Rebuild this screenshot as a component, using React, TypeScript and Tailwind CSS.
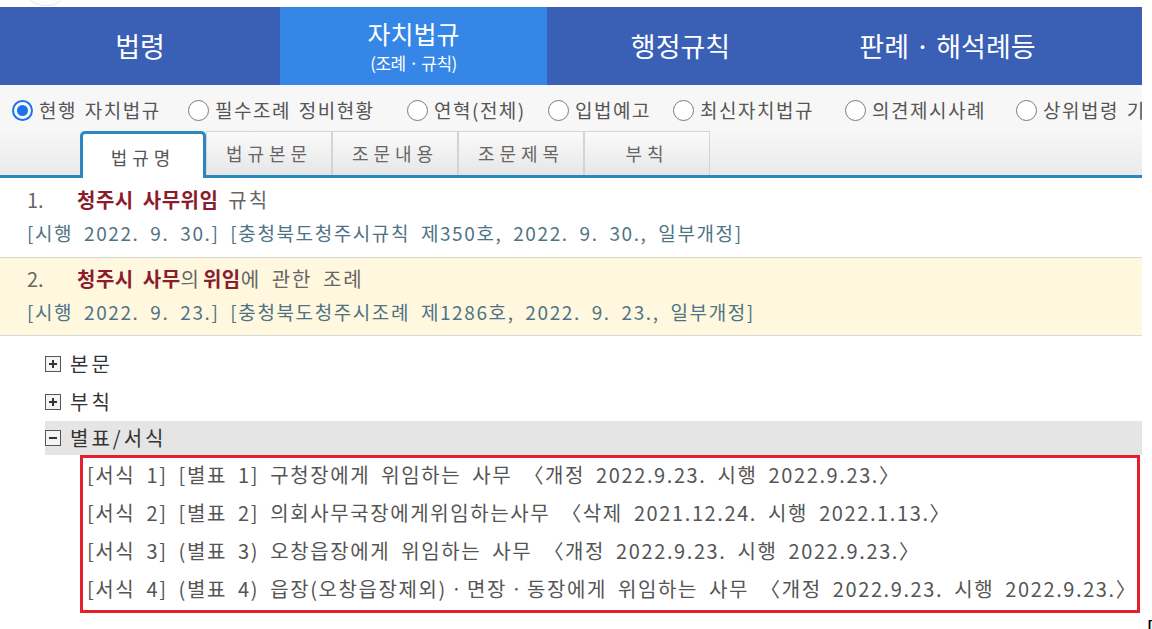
import React from "react";

const KR = { fontFamily: '"Noto Sans CJK KR", "Noto Sans", sans-serif' };

function Radio({ checked }: { checked?: boolean }) {
  return (
    <span
      className={
        "inline-flex items-center justify-center w-[21px] h-[21px] rounded-full shrink-0 bg-white " +
        (checked ? "border-2 border-[#1a73e8]" : "border-[1.5px] border-[#7a7a7a]")
      }
    >
      {checked && <span className="w-[11px] h-[11px] rounded-full bg-[#1a73e8]" />}
    </span>
  );
}

function TreeIcon({ open }: { open?: boolean }) {
  return (
    <span className="inline-flex items-center justify-center w-[16px] h-[16px] border border-[#555] bg-[#f4f4f4] shrink-0">
      <svg width="10" height="10" viewBox="0 0 10 10">
        <rect x="1" y="4" width="8" height="2" fill="#333" />
        {!open && <rect x="4" y="1" width="2" height="8" fill="#333" />}
      </svg>
    </span>
  );
}

export default function App() {
  const radios: [string, number, boolean?][] = [
    ["현행 자치법규", 176, true],
    ["필수조례 정비현황", 219],
    ["연혁(전체)", 141],
    ["입법예고", 125],
    ["최신자치법규", 172],
    ["의견제시사례", 171],
    ["상위법령 기준", 200],
  ];
  const tabs = ["법규본문", "조문내용", "조문제목", "부칙"];
  const forms = [
    "[서식 1] [별표 1] 구청장에게 위임하는 사무 〈개정 2022.9.23. 시행 2022.9.23.〉",
    "[서식 2] [별표 2] 의회사무국장에게위임하는사무 〈삭제 2021.12.24. 시행 2022.1.13.〉",
    "[서식 3] (별표 3) 오창읍장에게 위임하는 사무 〈개정 2022.9.23. 시행 2022.9.23.〉",
    "[서식 4] (별표 4) 읍장(오창읍장제외)ㆍ면장ㆍ동장에게 위임하는 사무 〈개정 2022.9.23. 시행 2022.9.23.〉",
  ];
  return (
    <div className="w-[1152px] h-[629px] bg-white overflow-hidden relative" style={KR}>
      <div className="absolute left-[24px] top-[-34px] w-[44px] h-[40px] rounded-full border border-[#e4e8ef] bg-[#fbfcfd]" />
      <div className="w-[1142px]">
        {/* top strip */}
        <div className="h-[7px]" />
        {/* header nav */}
        <div className="relative flex h-[78px] bg-[#3a60b5] text-white">
          <div className="w-[280px] flex items-center justify-center text-[27px]">법령</div>
          <div className="w-[267px] bg-[#3586e6] flex flex-col items-center pt-[12px] gap-[7px]">
            <span className="text-[25px] leading-[28px]">자치법규</span>
            <span className="text-[17px] leading-[18px] tracking-[-0.5px]">(조례 · 규칙)</span>
          </div>
          <div className="w-[267px] flex items-center justify-center text-[27px]">행정규칙</div>
          <div className="w-[267px] flex items-center justify-center text-[27px]">판례 · 해석례등</div>
        </div>
        {/* radio + tab area */}
        <div className="bg-[#f7f7f7]">
          <div className="h-[43px] pt-[8px] flex items-center pl-[12px] overflow-hidden whitespace-nowrap text-[19px] text-[#555] tracking-[1.5px] [word-spacing:2px]">
            {radios.map(([t, w, c]) => (
              <div key={t} className="flex items-center gap-[6px] shrink-0" style={{ width: w }}>
                <Radio checked={c} />
                <span>{t}</span>
              </div>
            ))}
          </div>
          <div className="h-[47px] flex items-end pl-[80px] bg-gradient-to-b from-[#f7f7f7] to-[#eaeaea]">
            <div className="relative z-10 w-[126px] h-[47px] -mb-[3px] bg-white border-[3px] border-b-0 border-[#2e86c1] rounded-t-[5px] flex items-center justify-center pt-[2px] text-[18px] text-[#555] tracking-[5px]">
              법규명
            </div>
            {tabs.map((t) => (
              <div
                key={t}
                className="w-[126px] h-[44px] border border-b-0 border-[#d4d4d4] bg-gradient-to-b from-[#fbfbfb] to-[#e6e6e6] flex items-center justify-center text-[18px] text-[#666] tracking-[5px]"
              >
                {t}
              </div>
            ))}
          </div>
        </div>
        <div className="h-[3px] bg-[#2e86c1]" />
        {/* result rows */}
        <div className="h-[80px] border-b border-[#d9d9d9] pl-[27px] pt-[7px]">
          <div className="flex items-center h-[30px] text-[20px] [word-spacing:4px]">
            <span className="w-[50px] text-[#666]">1.</span>
            <span className="font-bold text-[#8a1c2c] tracking-[0.5px]">청주시 사무위임</span>
            <span className="text-[#666] ml-[10px] tracking-[2px]">규칙</span>
          </div>
          <div className="mt-[3px] h-[30px] flex items-center text-[19px] text-[#4e7385] tracking-[1.6px] [word-spacing:5px] whitespace-nowrap">
            [시행 2022. 9. 30.] [충청북도청주시규칙 제350호, 2022. 9. 30., 일부개정]
          </div>
        </div>
        <div className="h-[78px] bg-[#fff8df] border-b border-[#d9d9d9] pl-[27px] pt-[6px]">
          <div className="flex items-center h-[30px] text-[20px] [word-spacing:4px]">
            <span className="w-[50px] text-[#666]">2.</span>
            <span className="font-bold text-[#8a1c2c] tracking-[0.5px]">청주시 사무</span>
            <span className="text-[#666] tracking-[1px]">의</span>
            <span className="font-bold text-[#8a1c2c] tracking-[0.5px] ml-[3px]">위임</span>
            <span className="text-[#666] tracking-[2px]">에 관한 조례</span>
          </div>
          <div className="mt-[3px] h-[30px] flex items-center text-[19px] text-[#4e7385] tracking-[1.6px] [word-spacing:5px] whitespace-nowrap">
            [시행 2022. 9. 23.] [충청북도청주시조례 제1286호, 2022. 9. 23., 일부개정]
          </div>
        </div>
        {/* tree */}
        <div className="pl-[45px] pt-[9px]">
          <div className="h-[38px] flex items-center gap-[9px] text-[20px] text-[#333] tracking-[3px]">
            <TreeIcon />
            <span>본문</span>
          </div>
          <div className="h-[38px] flex items-center gap-[9px] text-[20px] text-[#333] tracking-[3px]">
            <TreeIcon />
            <span>부칙</span>
          </div>
          <div className="h-[34px] flex items-center gap-[9px] bg-[#e5e5e5] text-[20px] text-[#333] tracking-[3px]">
            <TreeIcon open />
            <span>별표/서식</span>
          </div>
          <div className="ml-[35px] w-[1060px] h-[158px] border-[3px] border-[#e3202b] pl-[4px] flex flex-col">
            {forms.map((f) => (
              <div key={f} className="h-[38px] pb-[5px] flex items-center whitespace-nowrap text-[20px] text-[#555] tracking-[1.6px] [word-spacing:5px]">
                {f}
              </div>
            ))}
          </div>
        </div>
      </div>
      <div className="absolute left-[1147px] top-[614px] text-[16px] font-bold text-black">[</div>
    </div>
  );
}
